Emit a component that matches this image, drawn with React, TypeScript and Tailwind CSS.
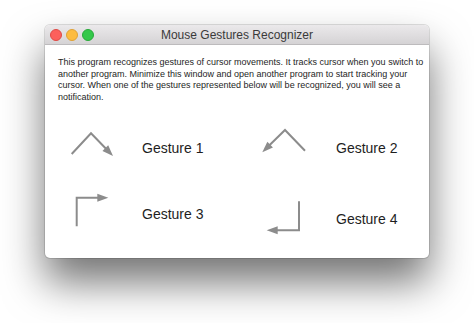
import React from 'react';

type Pt = [number, number];

// polyline with a filled arrow head on the last point
function Gesture({ pts, w, h }: { pts: Pt[]; w: number; h: number }) {
  const [tx, ty] = pts[pts.length - 1];
  const [px, py] = pts[pts.length - 2];
  const len = Math.hypot(tx - px, ty - py);
  const dx = (tx - px) / len;
  const dy = (ty - py) / len;
  const head = 11;
  const half = 4;
  const bx = tx - dx * head;
  const by = ty - dy * head;
  const line = [...pts.slice(0, -1), [bx + dx, by + dy] as Pt];
  const tri = `${tx},${ty} ${bx - dy * half},${by + dx * half} ${bx + dy * half},${by - dx * half}`;
  return (
    <svg width={w} height={h} viewBox={`0 0 ${w} ${h}`} className="shrink-0 overflow-visible">
      <polyline
        points={line.map((p) => p.join(',')).join(' ')}
        fill="none"
        stroke="#8c8c8c"
        strokeWidth={2}
        strokeLinejoin="miter"
      />
      <polygon points={tri} fill="#8c8c8c" />
    </svg>
  );
}

export default function App() {
  return (
    <div className="w-[474px] h-[323px] bg-white pt-[25px] pl-[45px] font-['Liberation_Sans',Arial,sans-serif]">
      <div className="w-[384px] h-[233px] bg-white rounded-[5px] overflow-hidden shadow-[0_0_0_1px_rgba(0,0,0,0.12),0_24px_42px_rgba(0,0,0,0.55)] flex flex-col">
        {/* title bar */}
        <div className="relative h-[20px] shrink-0 flex items-center bg-gradient-to-b from-[#ebe9eb] to-[#d5d3d5] border-b border-[#bdbbbd]">
          <div className="flex items-center gap-[4px] pl-[5px]">
            <span className="w-[12px] h-[12px] rounded-full bg-[#fc605c] border border-[#de4a45]" />
            <span className="w-[12px] h-[12px] rounded-full bg-[#fdbc40] border border-[#dea236]" />
            <span className="w-[12px] h-[12px] rounded-full bg-[#34c84a] border border-[#28a93a]" />
          </div>
          <div className="absolute inset-0 flex items-center justify-center text-[12px] text-[#3a3a3a]">
            Mouse Gestures Recognizer
          </div>
        </div>

        {/* body */}
        <div className="pt-[12px] pl-[13px] text-[9px] leading-[11.5px] text-[#1e1e1e] whitespace-nowrap">
          This program recognizes gestures of cursor movements. It tracks cursor when you switch to
          <br />
          another program. Minimize this window and open another program to start tracking your
          <br />
          cursor. When one of the gestures represented below will be recognized, you will see a
          <br />
          notification.
        </div>

        <div className="mt-[13px] grid grid-cols-2 grid-rows-[64px_69px] text-[14px] text-[#1e1e1e]">
          <div className="flex items-center pl-[23px]">
            <Gesture w={48} h={40} pts={[[3.7, 26], [23, 5.3], [45, 28]]} />
            <span className="ml-[26px]">Gesture 1</span>
          </div>
          <div className="flex items-center pl-[24px]">
            <Gesture w={48} h={40} pts={[[44, 22.7], [24, 2], [1.3, 24.3]]} />
            <span className="ml-[27px]">Gesture 2</span>
          </div>
          <div className="flex items-center pl-[23px]">
            <Gesture w={48} h={48} pts={[[8.7, 35.2], [8.7, 6.8], [40.3, 6.8]]} />
            <span className="ml-[26px]">Gesture 3</span>
          </div>
          <div className="flex items-center pl-[24px]">
            <Gesture w={48} h={48} pts={[[38, 10.2], [38, 39.2], [5.7, 39.2]]} />
            <span className="ml-[27px] pt-[10px]">Gesture 4</span>
          </div>
        </div>
      </div>
    </div>
  );
}
